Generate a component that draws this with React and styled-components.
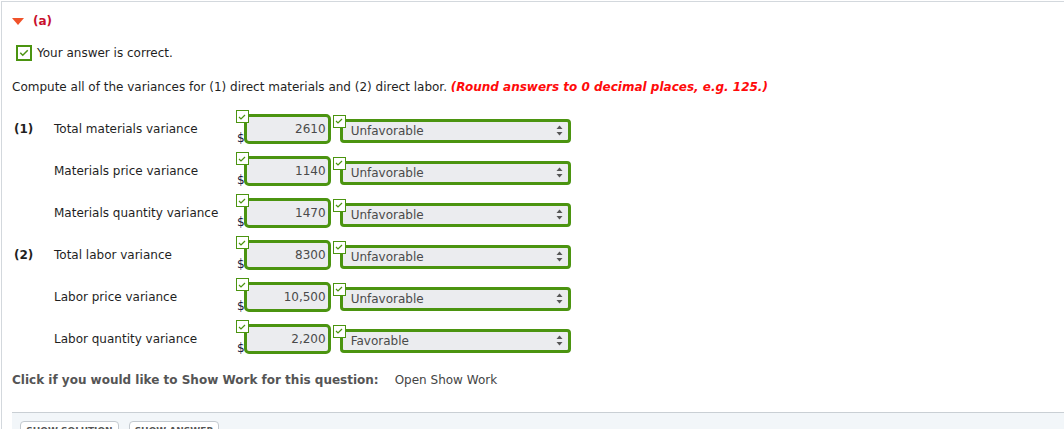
import styled, { createGlobalStyle } from "styled-components";

const GlobalStyle = createGlobalStyle`
  html, body {
    margin: 0;
    padding: 0;
    background: #ffffff;
  }
  body {
    font-family: "DejaVu Sans", Verdana, sans-serif;
    font-size: 12px;
    color: #1f1f1f;
  }
`;

const green = "#4b9410";

const Part = styled.div`
  margin: 1px 0 0 1px;
  border-top: 1px solid #d3d8dd;
  border-left: 1px solid #d3d8dd;
  padding: 11px 0 0 10px;
  height: 428px;
  box-sizing: border-box;
  overflow: hidden;
`;

const Header = styled.div`
  display: flex;
  align-items: center;
  gap: 9px;
  height: 16px;
  font-weight: bold;
  color: #c8102e;
  font-size: 12px;
`;

const Caret = styled.span`
  width: 0;
  height: 0;
  border-left: 6px solid transparent;
  border-right: 6px solid transparent;
  border-top: 7px solid #f0522a;
`;

const Status = styled.div`
  display: flex;
  align-items: center;
  gap: 5px;
  margin: 16px 0 0 4px;
  height: 16px;
`;

const BigCheck = styled.span`
  width: 16px;
  height: 16px;
  box-sizing: border-box;
  border: 2px solid ${green};
  display: flex;
  align-items: center;
  justify-content: center;
  background: #fff;
`;

const Badge = styled.span`
  position: absolute;
  top: -7px;
  left: ${({ $left }) => $left}px;
  width: 13px;
  height: 13px;
  box-sizing: border-box;
  border: 1.5px solid ${green};
  background: #fff;
  display: flex;
  align-items: center;
  justify-content: center;
`;

const Instruction = styled.p`
  margin: 18px 0 0 0;
  line-height: 16px;
`;

const Hint = styled.span`
  color: #ff0a0a;
  font-weight: bold;
  font-style: italic;
`;

const Rows = styled.div`
  margin-top: 13px;
  display: flex;
  flex-direction: column;
`;

const Row = styled.div`
  display: grid;
  grid-template-columns: 40px 183px auto;
  align-items: center;
  height: 42px;
  padding-left: 2px;
`;

const Num = styled.span`
  font-weight: bold;
`;

const Label = styled.span``;

const Answer = styled.div`
  display: flex;
  align-items: center;
  gap: 9px;
`;

const Money = styled.div`
  display: flex;
  align-items: flex-end;
`;

const Dollar = styled.span`
  color: #15173a;
  line-height: 12px;
  margin-right: -1px;
`;

const Field = styled.div`
  position: relative;
  width: 87px;
  height: 30px;
  box-sizing: border-box;
  border: 3px solid ${green};
  border-radius: 5px;
  background: #ebecef;
  display: flex;
  align-items: center;
  justify-content: flex-end;
  padding-right: 2px;
  color: #4a4a4a;
`;

const Select = styled.div`
  position: relative;
  width: 231px;
  height: 24px;
  box-sizing: border-box;
  border: 3px solid ${green};
  border-radius: 4px;
  background: #ebecef;
  display: flex;
  align-items: center;
  justify-content: space-between;
  padding: 0 5px 0 8px;
  color: #4a4a4a;
  margin-top: 3px;
`;

const ShowWork = styled.div`
  display: flex;
  gap: 16px;
  margin-top: 12px;
  line-height: 16px;
  color: #555;
`;

const ShowWorkLabel = styled.span`
  font-weight: bold;
`;

const ShowWorkLink = styled.span`
  color: #444;
`;

const Footer = styled.div`
  margin-top: 24px;
  border-top: 1px solid #c9cfd4;
  background: #f2f6f9;
  padding: 8px 0 0 8px;
  display: flex;
  gap: 10px;
  height: 40px;
`;

const Button = styled.span`
  border: 1px solid #c3c9cf;
  border-radius: 4px;
  background: #fff;
  height: 20px;
  width: ${({ $w }) => $w}px;
  box-sizing: border-box;
  font-size: 9px;
  font-weight: bold;
  color: #555;
  display: flex;
  align-items: center;
  justify-content: center;
`;

const Tick = ({ size = 9 }) => (
  <svg width={size} height={size * 0.75} viewBox="0 0 12 9">
    <path d="M1.5 4.5 L4.5 7.5 L10.5 1.5" fill="none" stroke={green} strokeWidth="1.8" />
  </svg>
);

const Arrows = () => (
  <svg width="7" height="11" viewBox="0 0 7 11">
    <path d="M3.5 0.5 L6.5 4 L0.5 4 Z" fill="#555" />
    <path d="M3.5 10.5 L6.5 7 L0.5 7 Z" fill="#555" />
  </svg>
);

const rows = [
  { num: "(1)", label: "Total materials variance", value: "2610", choice: "Unfavorable" },
  { num: "", label: "Materials price variance", value: "1140", choice: "Unfavorable" },
  { num: "", label: "Materials quantity variance", value: "1470", choice: "Unfavorable" },
  { num: "(2)", label: "Total labor variance", value: "8300", choice: "Unfavorable" },
  { num: "", label: "Labor price variance", value: "10,500", choice: "Unfavorable" },
  { num: "", label: "Labor quantity variance", value: "2,200", choice: "Favorable" },
];

const App = () => (
  <>
    <GlobalStyle />
    <Part>
      <Header>
        <Caret />
        <span>(a)</span>
      </Header>
      <Status>
        <BigCheck>
          <Tick size={10} />
        </BigCheck>
        <span>Your answer is correct.</span>
      </Status>
      <Instruction>
        Compute all of the variances for (1) direct materials and (2) direct labor.{" "}
        <Hint>(Round answers to 0 decimal places, e.g. 125.)</Hint>
      </Instruction>
      <Rows>
        {rows.map((r) => (
          <Row key={r.label}>
            <Num>{r.num}</Num>
            <Label>{r.label}</Label>
            <Answer>
              <Money>
                <Dollar>$</Dollar>
                <Field>
                  <Badge $left={-11}>
                    <Tick size={8} />
                  </Badge>
                  {r.value}
                </Field>
              </Money>
              <Select>
                <Badge $left={-10}>
                  <Tick size={8} />
                </Badge>
                <span>{r.choice}</span>
                <Arrows />
              </Select>
            </Answer>
          </Row>
        ))}
      </Rows>
      <ShowWork>
        <ShowWorkLabel>Click if you would like to Show Work for this question:</ShowWorkLabel>
        <ShowWorkLink>Open Show Work</ShowWorkLink>
      </ShowWork>
      <Footer>
        <Button $w={99}>SHOW SOLUTION</Button>
        <Button $w={90}>SHOW ANSWER</Button>
      </Footer>
    </Part>
  </>
);

export default App;
